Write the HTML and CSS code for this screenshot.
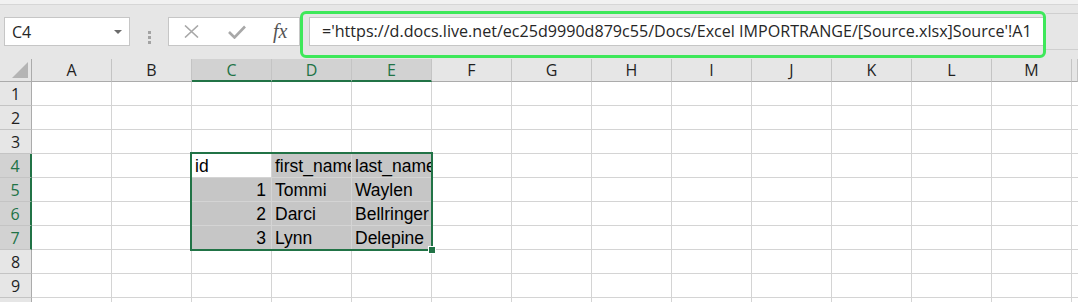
FILE: index.html
```html
<!DOCTYPE html>
<html lang="en">
<head>
    <meta charset="UTF-8">
    <title>Book1 - Excel</title>
    <link rel="stylesheet" href="styles.css">
</head>

<body>
    <div class="top-strip"></div>

    <div class="formula-row">
        <div class="name-box">
            <span>C4</span>
            <span class="caret"></span>
        </div>
        <div class="grip"><i></i><i></i><i></i></div>
        <div class="fx-buttons">
            <svg class="btn-cancel" width="15" height="13" viewBox="0 0 15 13">
                <path d="M1 0.5 L14 12.5 M14 0.5 L1 12.5" stroke="#a8a8a8" stroke-width="1.6" fill="none"/>
            </svg>
            <svg class="btn-enter" width="18" height="14" viewBox="0 0 18 14">
                <path d="M1 7 L6.5 12.5 L17 1.5" stroke="#a8a8a8" stroke-width="2.6" fill="none"/>
            </svg>
            <span class="fx">fx</span>
        </div>
        <div class="highlight">
            <div class="formula-input">='https://d.docs.live.net/ec25d9990d879c55/Docs/Excel IMPORTRANGE/[Source.xlsx]Source'!A1</div>
        </div>
        <div class="formula-rest"></div>
    </div>

    <div class="sheet-wrap">
        <div class="sheet" id="sheet"></div>
        <div class="sheet overlay">
            <div class="selection"><span class="fill-handle"></span></div>
        </div>
    </div>

    <script>
        // Column N is only a sliver at the window edge, so it gets no label
        const columns = ['A', 'B', 'C', 'D', 'E', 'F', 'G', 'H', 'I', 'J', 'K', 'L', 'M', ''];
        const selectedCols = ['C', 'D', 'E'];
        const selectedRows = [4, 5, 6, 7];

        // Cell values copied over from the source workbook
        const data = {
            C4: 'id', D4: 'first_name', E4: 'last_name',
            C5: 1, D5: 'Tommi', E5: 'Waylen',
            C6: 2, D6: 'Darci', E6: 'Bellringer',
            C7: 3, D7: 'Lynn', E7: 'Delepine'
        };

        const sheet = document.getElementById('sheet');
        let html = '<div class="corner"><span></span></div>';

        columns.forEach(col => {
            const sel = selectedCols.includes(col) ? ' selected' : '';
            html += `<div class="col-head${sel}">${col}</div>`;
        });

        for (let row = 1; row <= 10; row++) {
            const sel = selectedRows.includes(row) ? ' selected' : '';
            // row 10 only shows its top edge
            html += `<div class="row-head${sel}">${row < 10 ? row : ''}</div>`;
            columns.forEach(col => {
                const ref = col + row;
                const value = data[ref] !== undefined ? data[ref] : '';
                let cls = 'cell';
                if (selectedCols.includes(col) && selectedRows.includes(row) && ref !== 'C4') cls += ' shaded';
                if (typeof value === 'number') cls += ' num';
                html += `<div class="${cls}">${value}</div>`;
            });
        }

        sheet.innerHTML = html;
    </script>
</body>
</html>
```

FILE: styles.css
```css
/* General Styles */
body {
    margin: 0;
    width: 1078px;
    height: 302px;
    overflow: hidden;
    background-color: #fff;
    font-family: "Open Sans", "Liberation Sans", sans-serif;
    color: #222;
}

.top-strip {
    height: 4px;
    background-color: #f1f1f1;
    border-bottom: 1px solid #d6d6d6;
}

/* Formula bar */
.formula-row {
    display: flex;
    align-items: flex-start;
    height: 54px;
    background-color: #e6e6e6;
}

.name-box {
    box-sizing: border-box;
    display: flex;
    align-items: center;
    justify-content: space-between;
    width: 126px;
    height: 29px;
    margin: 12px 0 0 4px;
    padding: 0 7px 0 7px;
    background-color: #fff;
    border: 1px solid #c6c6c6;
    font-size: 16px;
    color: #262626;
}

.caret {
    width: 0;
    height: 0;
    border-left: 4px solid transparent;
    border-right: 4px solid transparent;
    border-top: 4px solid #6b6b6b;
}

.grip {
    display: flex;
    flex-direction: column;
    align-items: center;
    gap: 2px;
    width: 38px;
    margin-top: 26px;
}

.grip i {
    width: 3px;
    height: 3px;
    background-color: #a3a3a3;
}

.fx-buttons {
    box-sizing: border-box;
    display: flex;
    align-items: center;
    width: 132px;
    height: 29px;
    margin-top: 12px;
    padding-left: 15px;
    background-color: #fff;
    border: 1px solid #c6c6c6;
}

.btn-enter {
    margin-left: 29px;
}

.fx {
    margin-left: 27px;
    font-family: "Liberation Serif", serif;
    font-style: italic;
    font-size: 20px;
    color: #555;
}

.highlight {
    box-sizing: border-box;
    width: 746px;
    height: 47px;
    margin-top: 6px;
    padding: 3px 0 0 6px;
    border: 3px solid #3ee85a;
    border-radius: 6px;
}

.formula-input {
    box-sizing: border-box;
    height: 29px;
    padding-left: 12px;
    background-color: #fff;
    border: 1px solid #c6c6c6;
    border-right: none;
    font-size: 16.1px;
    line-height: 27px;
    color: #262626;
    white-space: nowrap;
    overflow: hidden;
}

.formula-rest {
    flex: 1;
    height: 35px;
    margin-top: 8px;
    border-top: 1px solid #cfcfcf;
    border-bottom: 1px solid #cfcfcf;
}

/* Sheet grid */
.sheet-wrap {
    display: grid;
}

.sheet {
    grid-area: 1 / 1;
    display: grid;
    grid-template-columns: 32px repeat(13, 80px) 6px;
    grid-template-rows: 23px;
    grid-auto-rows: 24px;
}

.overlay {
    grid-template-rows: 23px repeat(10, 24px);
    pointer-events: none;
}

.corner,
.col-head,
.row-head {
    box-sizing: border-box;
    background-color: #e6e6e6;
    font-size: 16px;
    color: #1f1f1f;
    overflow: hidden;
}

.corner {
    position: relative;
    border-right: 1px solid #ababab;
    border-bottom: 1px solid #ababab;
}

.corner span {
    position: absolute;
    right: 3px;
    bottom: 3px;
    width: 0;
    height: 0;
    border-left: 16px solid transparent;
    border-bottom: 16px solid #b4b4b4;
}

.col-head {
    text-align: center;
    line-height: 22px;
    border-right: 1px solid #c4c4c4;
    border-bottom: 1px solid #ababab;
}

.row-head {
    text-align: center;
    line-height: 24px;
    border-right: 1px solid #ababab;
    border-bottom: 1px solid #c4c4c4;
}

.col-head.selected {
    background-color: #d2d2d2;
    color: #217346;
    border-bottom: 2px solid #217346;
}

.row-head.selected {
    background-color: #d2d2d2;
    color: #217346;
    border-right: 2px solid #217346;
}

.cell {
    box-sizing: border-box;
    padding: 2px 3px 0 3px;
    border-right: 1px solid #d4d4d4;
    border-bottom: 1px solid #d4d4d4;
    font-family: "Liberation Sans", sans-serif;
    font-size: 17.5px;
    line-height: 21px;
    color: #000;
    white-space: nowrap;
    overflow: hidden;
}

.cell.shaded {
    background-color: #c6c6c6;
}

.cell.num {
    text-align: right;
    padding-right: 5px;
}

/* Selected range C4:E7 */
.selection {
    grid-column: 4 / 7;
    grid-row: 5 / 9;
    position: relative;
    margin: -2px -1px -1px -2px;
    border: 2px solid #217346;
}

.fill-handle {
    position: absolute;
    right: -5px;
    bottom: -5px;
    width: 6px;
    height: 6px;
    background-color: #217346;
    border: 1px solid #fff;
}
```
